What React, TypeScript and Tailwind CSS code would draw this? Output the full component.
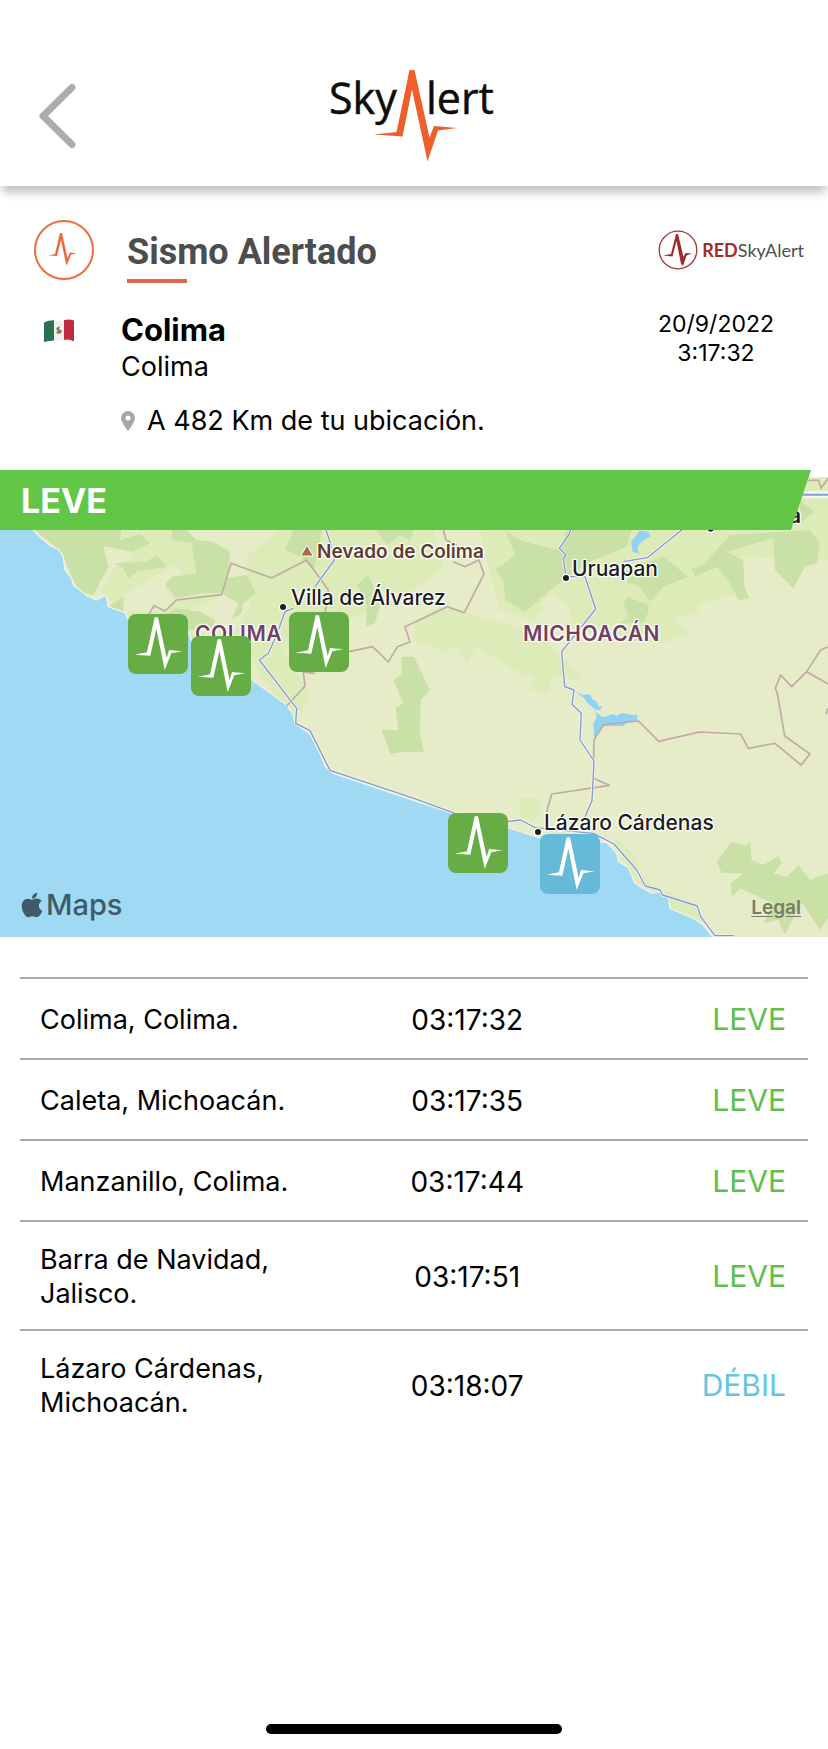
import React from "react";
import { FaApple } from "react-icons/fa";

type Level = "LEVE" | "DÉBIL";

interface Reading {
  place: string;
  time: string;
  level: Level;
}

const readings: Reading[] = [
  { place: "Colima, Colima.", time: "03:17:32", level: "LEVE" },
  { place: "Caleta, Michoacán.", time: "03:17:35", level: "LEVE" },
  { place: "Manzanillo, Colima.", time: "03:17:44", level: "LEVE" },
  { place: "Barra de Navidad, Jalisco.", time: "03:17:51", level: "LEVE" },
  { place: "Lázaro Cárdenas, Michoacán.", time: "03:18:07", level: "DÉBIL" },
];

const levelColor: Record<Level, string> = {
  LEVE: "text-[#5fc04c]",
  DÉBIL: "text-[#62c6df]",
};

const pins = [
  { name: "Barra de Navidad", place: "left-[128px] top-[137px]", color: "bg-[#67ad45]" },
  { name: "Manzanillo", place: "left-[191px] top-[159px]", color: "bg-[#67ad45]" },
  { name: "Colima", place: "left-[289px] top-[135px]", color: "bg-[#67ad45]" },
  { name: "Caleta", place: "left-[448px] top-[336px]", color: "bg-[#67ad45]" },
  { name: "Lázaro Cárdenas", place: "left-[540px] top-[357px]", color: "bg-[#66bad9]" },
];

const coastRoad =
  "M978 210 L995 260 L1003 300 L945 380 M880 445 L855 455 L830 525 L805 580 L778 600 L890 745 L887 790 L930 812 L990 931 L1242 1015 L1365 1060 L1525 1084 L1562 1080 L1605 1103 L1780 1120 L1842 1152 L1910 1230 L1936 1278 L1980 1290 L1988 1305 L2092 1338 L2102 1370 L2145 1427 H2202";

const inlandRoad =
  "M1712 210 L1708 222 L1678 265 L1698 285 L1690 295 L1698 350 H1755 L1787 447 L1685 575 L1694 680 L1722 690 L1716 733 L1744 760 L1740 840 L1782 903 L1776 1022 L1755 1070 M2045 210 L1942 293 L1870 305";

const halo =
  "absolute whitespace-nowrap leading-6 [text-shadow:1px_1px_1px_#fff,-1px_1px_1px_#fff,1px_-1px_1px_#fff,-1px_-1px_1px_#fff,0_0_3px_#fff]";

function SkyAlertLogo() {
  return (
    <svg viewBox="0 0 170 94" className="h-[94px] w-[170px]" role="img" aria-label="SkyAlert">
      <g
        fontFamily="'Open Sans', 'Noto Sans', sans-serif"
        fontSize="43"
        fontWeight="500"
        fill="#0d0d0d"
        stroke="#0d0d0d"
        strokeWidth="0.500"
      >
        <text x="0" y="45">Sky</text>
        <text x="97" y="45">lert</text>
      </g>
      <path
        d="M45 65.500 L67.500 63 L80.500 1 H85.500 L100.500 68.500 L105 57 L128 59 L109 61.500 L98.500 92.500 L83 20.500 L73.500 67.500 Z"
        fill="#ee5f2c"
      />
    </svg>
  );
}

function QuakeIcon() {
  return (
    <svg viewBox="0 0 60 60" className="size-[60px]" fill="none" aria-hidden="true">
      <circle cx="30" cy="30" r="29" stroke="#ee6d3c" strokeWidth="2" />
      <path
        d="M14.500 35.500 L21 34 L26 13 H28 L33.500 38 L36 32.500 L42.500 33.300 L37 34.800 L33 45 L32 44 L27 20 L23 36 Z"
        fill="#ee6a36"
      />
    </svg>
  );
}

function RedSkyAlertLogo() {
  return (
    <div className="flex items-center gap-1">
      <svg viewBox="0 0 40 40" className="size-10" fill="none" aria-hidden="true">
        <circle cx="20" cy="20" r="18.800" stroke="#a63a3a" strokeWidth="1.300" />
        <path
          d="M5 25.500 L13 24 L18 4 H20 L25.500 27 L27.500 23 L34 23.500 L28.500 25.500 L25 36 L23 34 L18.500 11 L14.500 26.500 Z"
          fill="#9c2b2b"
        />
      </svg>
      <span className="font-[Lato,sans-serif] text-[18px] leading-6 text-[#4d4d4d]">
        <b className="font-bold text-[#a02c2c]">RED</b>SkyAlert
      </span>
    </div>
  );
}

function MapDrawing() {
  return (
    <svg viewBox="0 51 2484 1380" preserveAspectRatio="xMinYMin slice" className="block size-full" aria-hidden="true">
      <rect x="0" y="51" width="2484" height="1380" fill="#e6ecc8" />
      <g fill="#ddebb9">
        <path d="M100 210 H560 L700 300 L640 420 L530 460 L640 540 L540 560 L380 470 L180 270Z" />
        <path d="M740 290 L840 210 H1300 L1330 320 L1200 420 L1060 470 L960 460 L850 580 L930 700 L880 790 L780 640 L700 520 L750 430Z" />
        <path d="M1242 490 L1330 430 L1450 475 L1620 520 L1680 590 L1740 640 L1740 660 L1660 650 L1640 700 L1590 690 L1600 650 L1560 640 L1480 590 L1430 560 L1400 610 L1370 560 L1330 575 L1242 540Z" />
        <path d="M1440 210 H2484 V300 L2190 290 L2220 400 L2100 430 L2090 460 L2020 470 L2060 520 L1990 550 L1880 540 L1700 500 L1640 430 L1600 480 L1500 450 L1470 340Z" />
        <path d="M1560 1015 H1620 V1060 L1600 1085 L1560 1070Z" />
        <path d="M1840 1130 L1880 1160 L1940 1260 L2010 1300 L2090 1330 L2120 1395 L1990 1340 L1900 1270Z" />
        <path d="M2370 60 H2484 V210 H2370Z" />
      </g>
      <g fill="#e6ecc8">
        <path d="M370 405 L530 312 L545 345 L505 360 L495 390 L525 420 L480 455 L370 455Z" />
        <path d="M310 258 L385 268 L400 300 L350 310 L325 360 L290 410 L275 408 L325 320Z" />
        <path d="M550 210 H720 L740 290 L680 275 L560 240Z" />
        <path d="M1620 430 L1660 400 L1700 430 L1720 490 L1660 500 L1640 460Z" />
      </g>
      <g fill="#c9e1a7">
        <path d="M105 210 H365 L360 240 L420 222 L450 250 L395 275 L310 258 L325 320 L280 405 L240 395 L215 350 L190 290 L160 255Z" />
        <path d="M345 310 L440 305 L470 285 L500 320 L410 335 L385 355 L370 325Z" />
        <path d="M515 210 H560 L590 240 L640 245 L690 275 L685 330 L665 400 L600 400 L530 415 L495 375 L515 350 L590 340 L575 250 L515 240Z" />
        <path d="M672 355 L740 345 L768 400 L730 430 L725 460 L697 478 L715 430 L672 405Z" />
        <path d="M495 465 L530 445 L600 455 L645 480 L640 505 L570 510Z" />
        <path d="M325 440 L370 410 V460Z" />
        <path d="M880 210 H965 L960 250 L940 330 L900 290 L855 270Z" />
        <path d="M1128 210 H1242 L1230 240 L1200 225 L1160 255Z" />
        <path d="M1070 375 L1105 345 L1142 430 L1125 490 L1098 498 L1100 430Z" />
        <path d="M1205 590 L1242 590 L1290 690 L1262 720 L1260 820 L1272 875 L1210 875 L1172 882 L1145 810 L1195 810 L1187 745 L1210 730 L1180 660 L1205 645Z" />
        <path d="M1515 210 L1560 240 L1610 255 L1680 270 L1700 210 H1895 L1880 260 L1780 300 L1700 350 L1640 400 L1575 455 L1515 420 L1510 360 L1488 330 L1545 285Z" />
        <path d="M1900 320 L1990 290 L2065 350 L1990 380 L1950 425 L1915 375 L1880 370Z" />
        <path d="M1870 425 L1885 412 L1945 435 L1945 455 L1930 490 L1860 490 L1885 470Z" />
        <path d="M2075 325 L2110 315 L2150 270 L2190 225 L2430 210 L2460 250 L2450 310 L2415 320 L2380 385 L2325 330 L2320 235 L2180 275 L2230 300 L2233 380 L2248 415 L2215 420 L2190 370 L2150 320 L2085 350Z" />
        <path d="M2400 120 L2442 155 L2400 190Z" />
        <path d="M2150 1205 L2195 1145 L2240 1158 L2250 1140 L2255 1200 L2290 1215 L2335 1188 L2345 1210 L2320 1240 L2360 1250 L2395 1215 L2430 1260 L2484 1240 V1375 L2460 1410 L2405 1325 L2380 1375 L2355 1425 L2335 1380 L2290 1390 L2320 1330 L2220 1285 L2195 1312 L2192 1270 L2230 1240 L2165 1238Z" />
      </g>
      <path
        d="M-20 205 H95 L120 232 L150 256 L175 268 L190 290 L195 330 L215 355 L220 375 L240 390 L262 408 L290 420 L318 405 L325 440 L375 458 L385 480 L470 520 L565 515 L580 560 L600 580 L750 655 L860 735 L880 765 L885 790 L930 822 L960 880 L975 918 L1000 940 L1060 960 L1242 1022 L1330 1050 L1440 1090 L1530 1105 L1625 1135 L1720 1135 L1820 1148 L1850 1180 L1855 1205 L1885 1222 L1905 1270 L1955 1300 L1985 1295 L2005 1315 L2010 1345 L2080 1375 L2110 1395 L2145 1440 H-20Z"
        fill="#9fd9f3"
        stroke="#eef3e4"
        strokeWidth="4"
      />
      <g fill="#8fd3f4">
        <path d="M1915 218 L1920 212 L1945 215 L1952 228 L1925 245 L1912 262 L1918 282 L1898 275 L1893 245Z" />
        <path d="M1720 692 L1750 705 L1768 702 L1778 718 L1790 725 L1796 740 L1808 738 L1800 750 L1785 748 L1762 728 L1750 712Z" />
        <path d="M1784 740 L1790 760 L1810 772 L1840 762 L1850 768 L1865 758 L1880 762 L1908 766 L1912 763 V783 L1880 788 L1870 798 L1812 798 L1800 815 L1783 838 L1780 790 L1790 775Z" />
      </g>
      <g fill="none" stroke="#c2a9a9" strokeWidth="5" strokeLinejoin="round">
        <path d="M445 465 L462 437 L495 453 L530 420 L665 404 L693 310 L815 354 L920 300 L985 390 L975 460" />
        <path d="M1047 575 L1118 560 L1165 606 L1192 560 L1230 546 L1215 500 L1342 440 L1393 458 L1452 342 L1437 300 L1395 320 L1360 305 M1330 210 L1338 240 L1370 255" />
        <path d="M945 640 L910 636 L915 678 L860 738" />
        <path d="M1640 1055 L1655 1002 L1828 976 L1780 955 L1782 840 L1810 794 L1915 783 L1976 844 L2098 816 L2222 822 L2245 865 L2325 850 L2403 915 L2430 882 L2354 828 L2332 700 L2326 685 L2342 645 L2375 680 L2420 635 L2462 570 L2484 560 M2420 635 L2484 672 M2484 745 L2478 762" />
        <path d="M2425 62 L2455 60 L2463 85 L2484 55" />
      </g>
      <g fill="none" stroke="#f3f6ee" strokeWidth="9" strokeLinejoin="round">
        <path d={coastRoad} />
        <path d={inlandRoad} />
        <path d="M2380 104 H2484" strokeWidth="22" />
      </g>
      <g fill="none" stroke="#8498cf" strokeWidth="4" strokeLinejoin="round">
        <path d={coastRoad} />
        <path d={inlandRoad} />
        <path d="M2380 104 H2484" strokeWidth="6" stroke="#7f9fd8" />
      </g>
      <g fill="#1c1c1c" stroke="#fff" strokeWidth="4">
        <circle cx="849" cy="441" r="11" />
        <circle cx="1698" cy="354" r="11" />
        <circle cx="1614" cy="1116" r="11" />
        <circle cx="2132" cy="205" r="12" />
      </g>
      <path d="M921 256 L940 288 H902Z" fill="#ae6b42" stroke="#fff" strokeWidth="3" />
    </svg>
  );
}

function Pin({ name, place, color }: { name: string; place: string; color: string }) {
  return (
    <button type="button" aria-label={name} className={`absolute size-[60px] rounded-lg ${place} ${color}`}>
      <svg viewBox="0 0 180 180" className="size-full" aria-hidden="true">
        <path
          d="M20 122 L57 115 L80 10 H90 L116 132 L123 108 L163 112 L130 118 L110 168 L85 44 L67 125 Z"
          fill="#fff"
        />
      </svg>
    </button>
  );
}

export default function App() {
  return (
    <div className="flex min-h-screen flex-col bg-white font-[Inter,'Liberation_Sans',sans-serif] text-black">
      <header className="relative z-10 flex h-[186px] items-end justify-center bg-white pb-[23px] shadow-[0_9px_8px_-2px_rgba(0,0,0,0.22)]">
        <button type="button" aria-label="Atrás" className="absolute top-[82px] left-9">
          <svg viewBox="0 0 44 68" className="h-[68px] w-11" fill="none" aria-hidden="true">
            <path d="M36 5.500 L7 34 L36 62.500" stroke="#adadad" strokeWidth="7" strokeLinecap="round" strokeLinejoin="round" />
          </svg>
        </button>
        <SkyAlertLogo />
      </header>

      <main className="flex-1">
        <section className="flex h-[124px] items-start justify-between pt-[34px] pr-6 pl-[34px]">
          <div className="flex gap-[33px]">
            <QuakeIcon />
            <div className="pt-[11px]">
              <h1 className="font-[Roboto,sans-serif] text-[36px] leading-[42px] font-bold text-[#4d4d4d]">
                Sismo Alertado
              </h1>
              <div className="mt-1.5 h-1 w-[60px] bg-[#d9694c]" />
            </div>
          </div>
          <div className="pt-2.5">
            <RedSkyAlertLogo />
          </div>
        </section>

        <section className="flex h-40 items-start">
          <svg viewBox="0 0 32 24" className="mt-[9px] ml-[43px] h-6 w-8" role="img" aria-label="México">
            <path d="M1 3.500 Q6 1 11 1.200 V21.500 Q6 21.500 1 23Z" fill="#2b7150" />
            <path d="M11 1.200 Q16 2.500 21 1.200 V21 Q16 23 11 21.500Z" fill="#f1f0ee" />
            <path d="M21 1.200 Q26 -0.500 31 1.500 V22.500 Q26 19.500 21 21Z" fill="#bb2c40" />
            <path d="M13 10 Q14 7 17 7.500 L16 10 L19 12 Q18 15 15 15 L13 13 L15 12Z" fill="#8b7a50" />
          </svg>
          <div className="ml-[46px] flex-1">
            <h2 className="text-[31px] leading-10 font-bold">Colima</h2>
            <p className="text-[27px] leading-[34px]">Colima</p>
            <p className="mt-5 flex items-center gap-3 text-[27px] leading-[34px]">
              <svg viewBox="0 0 14 20" className="h-5 w-3.5" aria-hidden="true">
                <path d="M7 0 A7 7 0 0 1 14 7 Q14 11 7 20 Q0 11 0 7 A7 7 0 0 1 7 0Z" fill="#a6a6a6" />
                <circle cx="7" cy="7" r="2.500" fill="#fff" />
              </svg>
              <span>A 482 Km de tu ubicación.</span>
            </p>
          </div>
          <p className="mr-[54px] text-center text-[23px] leading-[29px]">
            20/9/2022
            <br />
            3:17:32
          </p>
        </section>

        <section className="relative pt-[7px]">
          <div className="relative h-[460px] overflow-hidden" aria-label="Mapa">
            <MapDrawing />
            <span className={`${halo} top-[63px] left-[317px] text-[19px] font-semibold text-[#5c3d2e]`}>
              Nevado de Colima
            </span>
            <span className={`${halo} top-[109px] left-[291px] text-[21px] font-medium text-[#1c1c1c]`}>
              Villa de Álvarez
            </span>
            <span className={`${halo} top-[80px] left-[572px] text-[21px] font-medium text-[#1c1c1c]`}>Uruapan</span>
            <span className={`${halo} top-[145px] left-[195px] text-[21px] font-semibold tracking-wide text-[#733f63]`}>
              COLIMA
            </span>
            <span className={`${halo} top-[145px] left-[523px] text-[21px] font-semibold tracking-wide text-[#733f63]`}>
              MICHOACÁN
            </span>
            <span className={`${halo} top-[334px] left-[544px] text-[21px] font-medium text-[#1c1c1c]`}>
              Lázaro Cárdenas
            </span>
            <span className={`${halo} top-[27px] left-[789px] text-[21px] font-semibold text-[#1c1c1c]`}>a</span>
            {pins.map((pin) => (
              <Pin key={pin.name} {...pin} />
            ))}
            <div className="absolute bottom-[14px] left-[18px] flex items-center text-[#3f5b69]">
              <FaApple className="size-7" />
              <span className="text-[29px] leading-9 font-medium">Maps</span>
            </div>
            <a
              href="#legal"
              className="absolute right-[27px] bottom-[17px] text-[19px] leading-6 font-semibold text-[#757d68] underline underline-offset-2"
            >
              Legal
            </a>
          </div>
          <div className="absolute top-0 right-[17px] left-0 flex h-[60px] items-center bg-[#61c646] pt-0.5 pl-[21px] [clip-path:polygon(0_0,100%_0,calc(100%-20px)_100%,0_100%)]">
            <strong className="text-[34px] leading-10 font-bold text-white">LEVE</strong>
          </div>
        </section>

        <section className="px-5 pt-10">
          <table className="w-full table-fixed border-separate border-spacing-0">
            <tbody>
              {readings.map((r) => (
                <tr key={r.place}>
                  <td className="w-[40%] border-t-2 border-[#a9a9a9] pt-[21px] pr-4 pb-[18px] pl-5 text-[27px] leading-[34px]">
                    {r.place}
                  </td>
                  <td className="w-[33%] border-t-2 border-[#a9a9a9] pt-[21px] pb-[18px] pl-1 text-center text-[28px] leading-10">
                    {r.time}
                  </td>
                  <td
                    className={`border-t-2 border-[#a9a9a9] pt-5 pr-[22px] pb-[19px] text-right text-[30px] leading-10 ${levelColor[r.level]}`}
                  >
                    {r.level}
                  </td>
                </tr>
              ))}
            </tbody>
          </table>
        </section>
      </main>

      <footer className="flex justify-center pb-[15px]">
        <div className="h-2.5 w-[296px] rounded-full bg-black" />
      </footer>
    </div>
  );
}
